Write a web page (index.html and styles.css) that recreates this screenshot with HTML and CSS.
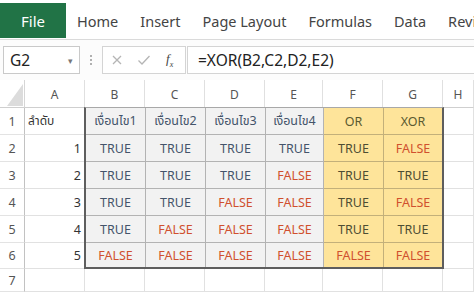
FILE: index.html
```html
<!DOCTYPE html>
<html>
<head>
<meta charset="utf-8">
<link rel="stylesheet" href="styles.css">
</head>
<body>
<div class="ribbon">
  <div class="tab file">File</div>
  <div class="tab">Home</div>
  <div class="tab">Insert</div>
  <div class="tab">Page Layout</div>
  <div class="tab">Formulas</div>
  <div class="tab">Data</div>
  <div class="tab">Review</div>
</div>
<div class="fbar">
  <div class="namebox"><span>G2</span><span class="caret">&#9662;</span></div>
  <div class="dots"><i></i><i></i><i></i></div>
  <div class="fxbox">
    <svg class="ic" width="12" height="12" viewBox="0 0 12 12"><path d="M2 2L10 10M10 2L2 10" stroke="#b5b5b5" stroke-width="1.3" fill="none"/></svg>
    <svg class="ic" width="14" height="12" viewBox="0 0 14 12"><path d="M1.5 6.5L5 10L12.5 2" stroke="#b5b5b5" stroke-width="1.3" fill="none"/></svg>
    <span class="fx">f<sub>x</sub></span>
  </div>
  <div class="formula">=XOR(B2,C2,D2,E2)</div>
</div>
<div class="sheet">
  <div class="corner"><div class="tri"></div></div>
  <div class="ch">A</div><div class="ch">B</div><div class="ch">C</div><div class="ch">D</div><div class="ch">E</div><div class="ch">F</div><div class="ch">G</div><div class="ch">H</div>

  <div class="rh">1</div><div class="cell left">ลำดับ</div><div class="cell colh"></div>
  <div class="rh">2</div><div class="cell num">1</div><div class="cell colh"></div>
  <div class="rh">3</div><div class="cell num">2</div><div class="cell colh"></div>
  <div class="rh">4</div><div class="cell num">3</div><div class="cell colh"></div>
  <div class="rh">5</div><div class="cell num">4</div><div class="cell colh"></div>
  <div class="rh">6</div><div class="cell num">5</div><div class="cell colh"></div>
  <div class="rh">7</div><div class="cell"></div><div class="cell"></div><div class="cell"></div><div class="cell"></div><div class="cell"></div><div class="cell"></div><div class="cell"></div><div class="cell"></div>

  <div class="tbl">
    <div class="g hd">เงื่อนไข1</div><div class="g hd">เงื่อนไข2</div><div class="g hd">เงื่อนไข3</div><div class="g hd">เงื่อนไข4</div><div class="y yh">OR</div><div class="y yh last">XOR</div>
    <div class="g t">TRUE</div><div class="g t">TRUE</div><div class="g t">TRUE</div><div class="g t">TRUE</div><div class="y yt">TRUE</div><div class="y f last">FALSE</div>
    <div class="g t">TRUE</div><div class="g t">TRUE</div><div class="g t">TRUE</div><div class="g f">FALSE</div><div class="y yt">TRUE</div><div class="y yt last">TRUE</div>
    <div class="g t">TRUE</div><div class="g t">TRUE</div><div class="g f">FALSE</div><div class="g f">FALSE</div><div class="y yt">TRUE</div><div class="y f last">FALSE</div>
    <div class="g t">TRUE</div><div class="g f">FALSE</div><div class="g f">FALSE</div><div class="g f">FALSE</div><div class="y yt">TRUE</div><div class="y yt last">TRUE</div>
    <div class="g f bot">FALSE</div><div class="g f bot">FALSE</div><div class="g f bot">FALSE</div><div class="g f bot">FALSE</div><div class="y f bot">FALSE</div><div class="y f bot last">FALSE</div>
  </div>
</div>
</body>
</html>
```
FILE: styles.css
```css
* { box-sizing: border-box; }
html, body { margin: 0; padding: 0; }
body {
  width: 474px;
  height: 292px;
  overflow: hidden;
  background: #fff;
  font-family: "Noto Sans", "Noto Sans Thai", "Open Sans", sans-serif;
  color: #333;
}
.ribbon {
  height: 40px;
  display: flex;
  align-items: flex-start;
  gap: 22px;
  border-bottom: 1px solid #dadada;
  background: #fff;
  white-space: nowrap;
  overflow: hidden;
}
.tab {
  flex-shrink: 0;
  font-size: 14.5px;
  color: #444;
  line-height: 20px;
  padding-top: 11px;
}
.file {
  background: #217346;
  color: #fff;
  width: 66px;
  height: 35px;
  margin-top: 3px;
  padding-top: 8px;
  text-align: center;
  margin-right: -11px;
  font-size: 15px;
}
.fbar {
  height: 40px;
  display: flex;
  align-items: flex-start;
  padding-top: 6px;
  padding-left: 3px;
  background: #fcfcfc;
}
.namebox {
  width: 77px;
  height: 28px;
  border: 1px solid #c9c9c9;
  background: #fff;
  display: flex;
  align-items: center;
  justify-content: space-between;
  padding: 0 6px 0 6px;
  font-size: 15.5px;
  color: #222;
}
.caret { font-size: 9px; color: #777; }
.dots {
  width: 22px;
  height: 28px;
  display: flex;
  flex-direction: column;
  align-items: center;
  justify-content: center;
  gap: 2px;
}
.dots i { width: 2px; height: 2px; background: #b0b0b0; display: block; }
.fxbox {
  width: 84px;
  height: 28px;
  border: 1px solid #d4d4d4;
  background: #fff;
  display: flex;
  align-items: center;
  gap: 14px;
  padding-left: 8px;
}
.fx { font-family: "Liberation Serif", serif; font-style: italic; font-size: 13px; color: #444; margin-left: 1px; }
.fx sub { font-size: 8px; }
.formula {
  flex: 1;
  height: 28px;
  border: 1px solid #d4d4d4;
  border-right: none;
  background: #fff;
  margin-left: 1px;
  font-size: 15.5px;
  color: #222;
  line-height: 26px;
  padding-left: 10px;
}
.sheet {
  display: grid;
  grid-template-columns: 25px 60px 60px 60px 60px 58px 60px 60px 1fr;
  grid-template-rows: 28px 27px 27px 27px 27px 27px 26px 1fr;
  height: 212px;
  font-size: 12px;
}
.corner {
  border-right: 1px solid #d6d6d6;
  border-bottom: 1px solid #cfcfcf;
  display: flex;
  align-items: flex-end;
  justify-content: flex-end;
  padding: 0 1px 1px 0;
}
.tri {
  width: 16px;
  height: 22px;
  background: #dcdcdc;
  clip-path: polygon(100% 0, 100% 100%, 0 100%);
}
.ch {
  border-right: 1px solid #e0e0e0;
  border-bottom: 1px solid #cfcfcf;
  color: #555;
  display: flex;
  align-items: center;
  justify-content: center;
  padding-top: 1px;
}
.rh {
  grid-column: 1;
  border-right: 1px solid #c2c2c2;
  border-bottom: 1px solid #e3e3e3;
  color: #555;
  font-size: 12.5px;
  display: flex;
  align-items: center;
  justify-content: center;
}
.cell {
  border-right: 1px solid #e1e1e1;
  border-bottom: 1px solid #e1e1e1;
  display: flex;
  align-items: center;
  color: #333;
}
.colh { grid-column: 9; }
.left { justify-content: flex-start; padding-left: 3px; }
.num { justify-content: flex-end; padding-right: 3px; font-size: 12.5px; }
.tbl {
  grid-column: 3 / 9;
  grid-row: 2 / 8;
  margin: -1px -1px 0 -1px;
  border-left: 2px solid #5e5e5e;
  border-right: 2px solid #5e5e5e;
  border-bottom: 2px solid #5e5e5e;
  border-top: 1px solid #a8a8a8;
  display: grid;
  grid-template-columns: 60px 60px 60px 58px 60px 1fr;
  grid-template-rows: 27px 27px 27px 27px 27px 1fr;
}
.g, .y {
  border-right: 1px solid #b3b3b3;
  border-bottom: 1px solid #b3b3b3;
  display: flex;
  align-items: center;
  justify-content: center;
  font-size: 12.5px;
}
.g { background: #f2f2f2; }
.y { background: #fee49a; border-color: #c3b07a; }
.last { border-right: none; }
.bot { border-bottom: none; }
.hd { color: #44546a; }
.yh { color: #5a5a30; }
.t { color: #44546a; }
.yt { color: #4d4d33; }
.f { color: #d0502e; }
```
